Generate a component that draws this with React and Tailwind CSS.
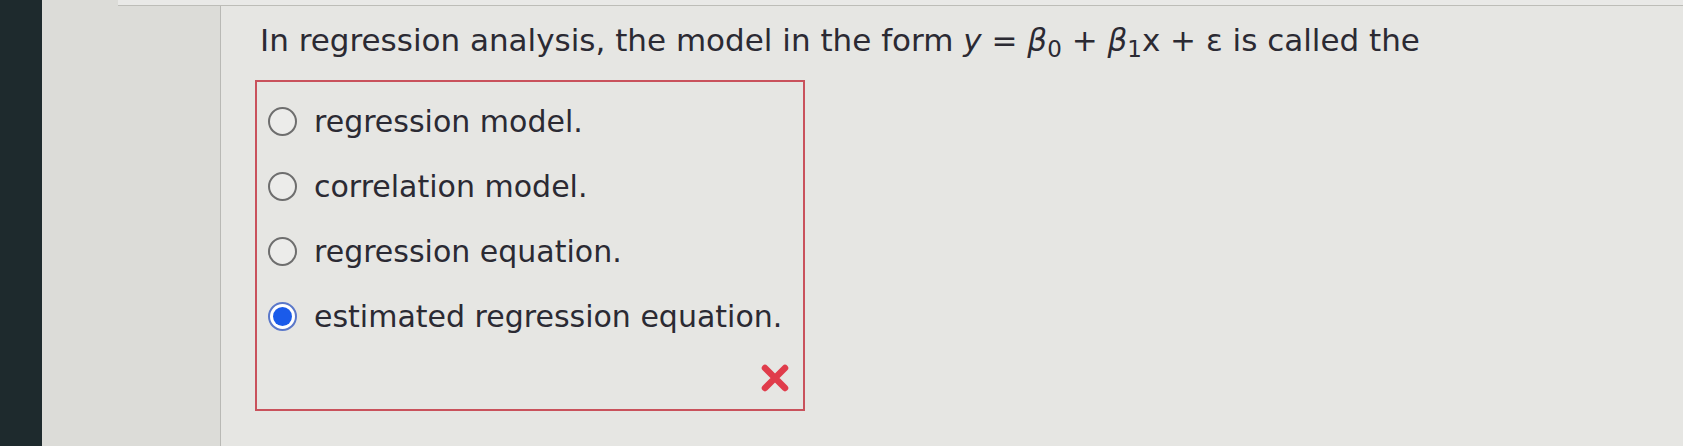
import React from 'react'

const options = [
  {label: 'regression model.', checked: false},
  {label: 'correlation model.', checked: false},
  {label: 'regression equation.', checked: false},
  {label: 'estimated regression equation.', checked: true},
]

function Radio({checked}) {
  if (checked) {
    return (
      <span className="flex h-[29px] w-[29px] shrink-0 items-center justify-center rounded-full border-[2px] border-[#5b78c9] bg-white">
        <span className="h-[19px] w-[19px] rounded-full bg-[#1a5bea]" />
      </span>
    )
  }
  return <span className="h-[29px] w-[29px] shrink-0 rounded-full border-[2px] border-[#6e6e6e] bg-[#ececea]" />
}

function WrongMark() {
  return (
    <svg width="28" height="28" viewBox="0 0 28 28">
      <path d="M4 4 L24 24 M24 4 L4 24" stroke="#e03c4b" strokeWidth="6.5" strokeLinecap="round" />
    </svg>
  )
}

export default function App() {
  return (
    <div className="flex h-[446px] w-full overflow-hidden text-[#2b2a33]" style={{fontFamily: '"DejaVu Sans", Verdana, sans-serif'}}>
      <div className="w-[42px] shrink-0 bg-[#1e2a2d]" />

      <div className="flex flex-1 flex-col">
        <div className="flex h-[6px] shrink-0">
          <div className="w-[76px] bg-[#dcdcd8]" />
          <div className="flex-1 border-b border-[#bdbdb8] bg-[#e9e9e7]" />
        </div>

        <div className="flex flex-1">
          <div className="w-[179px] shrink-0 border-r border-[#b9b9b5] bg-[#dcdcd8]" />

          <div className="flex-1 bg-[#e6e6e3] pl-[34px] pt-[16px]">
            <p className="ml-[5px] text-[31px] leading-[36px] whitespace-nowrap">
              In regression analysis, the model in the form{' '}
              <i>y</i> = <i>β</i><sub className="text-[23px]">0</sub> + <i>β</i><sub className="text-[23px]">1</sub>x + ε is called the
            </p>

            <div className="mt-[22px] flex w-[550px] flex-col border-[2px] border-[#c9525c] pb-[17px] pl-[11px] pr-[14px] pt-[7px]">
              {options.map((o) => (
                <label key={o.label} className="flex h-[65px] items-center gap-[17px]">
                  <Radio checked={o.checked} />
                  <span className="text-[30px] leading-[36px] whitespace-nowrap">{o.label}</span>
                </label>
              ))}
              <div className="flex justify-end pt-[15px]">
                <WrongMark />
              </div>
            </div>
          </div>
        </div>
      </div>
    </div>
  )
}
